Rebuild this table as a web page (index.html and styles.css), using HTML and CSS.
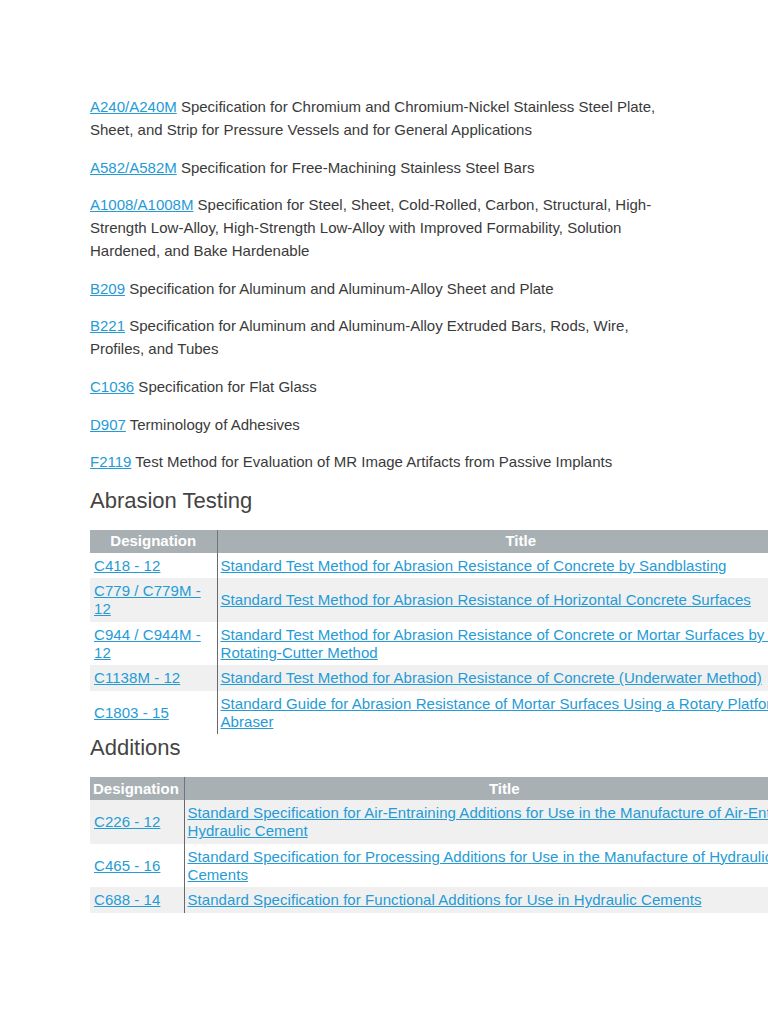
FILE: index.html
```html
<!DOCTYPE html>
<html>
<head>
<meta charset="utf-8">
<link rel="stylesheet" href="styles.css">
</head>
<body>
<div class="page">
  <div class="refs">
    <p><a href="#">A240/A240M</a> Specification for Chromium and Chromium-Nickel Stainless Steel Plate, Sheet, and Strip for Pressure Vessels and for General Applications</p>
    <p><a href="#">A582/A582M</a> Specification for Free-Machining Stainless Steel Bars</p>
    <p><a href="#">A1008/A1008M</a> Specification for Steel, Sheet, Cold-Rolled, Carbon, Structural, High-Strength Low-Alloy, High-Strength Low-Alloy with Improved Formability, Solution Hardened, and Bake Hardenable</p>
    <p><a href="#">B209</a> Specification for Aluminum and Aluminum-Alloy Sheet and Plate</p>
    <p><a href="#">B221</a> Specification for Aluminum and Aluminum-Alloy Extruded Bars, Rods, Wire, Profiles, and Tubes</p>
    <p><a href="#">C1036</a> Specification for Flat Glass</p>
    <p><a href="#">D907</a> Terminology of Adhesives</p>
    <p><a href="#">F2119</a> Test Method for Evaluation of MR Image Artifacts from Passive Implants</p>
  </div>

  <h2>Abrasion Testing</h2>
  <table class="std t1">
    <colgroup><col class="c-des1"><col></colgroup>
    <thead>
      <tr><th>Designation</th><th class="sep">Title</th></tr>
    </thead>
    <tbody>
      <tr><td><a href="#">C418 - 12</a></td><td class="sep"><a href="#">Standard Test Method for Abrasion Resistance of Concrete by Sandblasting</a></td></tr>
      <tr class="alt"><td><a href="#">C779 / C779M - 12</a></td><td class="sep"><a href="#">Standard Test Method for Abrasion Resistance of Horizontal Concrete Surfaces</a></td></tr>
      <tr><td><a href="#">C944 / C944M - 12</a></td><td class="sep"><a href="#">Standard Test Method for Abrasion Resistance of Concrete or Mortar Surfaces by the Rotating-Cutter Method</a></td></tr>
      <tr class="alt"><td><a href="#">C1138M - 12</a></td><td class="sep"><a href="#">Standard Test Method for Abrasion Resistance of Concrete (Underwater Method)</a></td></tr>
      <tr><td><a href="#">C1803 - 15</a></td><td class="sep"><a href="#">Standard Guide for Abrasion Resistance of Mortar Surfaces Using a Rotary Platform Abraser</a></td></tr>
    </tbody>
  </table>

  <h2 class="after-table">Additions</h2>
  <table class="std t2">
    <colgroup><col class="c-des2"><col></colgroup>
    <thead>
      <tr><th>Designation</th><th class="sep">Title</th></tr>
    </thead>
    <tbody>
      <tr class="alt"><td><a href="#">C226 - 12</a></td><td class="sep"><a href="#">Standard Specification for Air-Entraining Additions for Use in the Manufacture of Air-Entraining Hydraulic Cement</a></td></tr>
      <tr><td><a href="#">C465 - 16</a></td><td class="sep"><a href="#">Standard Specification for Processing Additions for Use in the Manufacture of Hydraulic Cements</a></td></tr>
      <tr class="alt"><td><a href="#">C688 - 14</a></td><td class="sep"><a href="#">Standard Specification for Functional Additions for Use in Hydraulic Cements</a></td></tr>
    </tbody>
  </table>
</div>
</body>
</html>
```

FILE: styles.css
```css
html, body {
  margin: 0;
  padding: 0;
  background: #ffffff;
  overflow-x: hidden;
}
body {
  font-family: "Liberation Sans", Arial, sans-serif;
  font-size: 15px;
  color: #3a3a3a;
}
.page {
  padding: 95px 0 0 90px;
  width: 734px;
}
a {
  color: #259bd6;
  text-decoration: underline;
}
.refs {
  width: 588px;
}
.refs p {
  margin: 0 0 14.6px 0;
  line-height: 23px;
}
h2 {
  font-weight: normal;
  font-size: 22px;
  line-height: 26px;
  color: #444444;
  margin: 0 0 16px 0;
}
h2.after-table {
  margin-top: 1px;
}
.std {
  width: 734px;
  border-collapse: collapse;
  table-layout: fixed;
  font-size: 15px;
  letter-spacing: 0.06px;
}
.c-des1 { width: 127px; }
.c-des2 { width: 94px; }
.std th {
  background: #a8b0b3;
  color: #ffffff;
  font-weight: bold;
  text-align: center;
  line-height: 18px;
  padding: 2.5px 4px;
  white-space: nowrap;
  letter-spacing: 0;
}
.std th.sep {
  border-left: 1px solid #6f7578;
}
.std td {
  line-height: 18px;
  padding: 4px 4px 3.5px 4px;
  vertical-align: middle;
  text-align: left;
}
.std td.sep {
  border-left: 1px solid #666a6c;
  padding-left: 3px;
}
.std tr.alt td {
  background: #f0f0f0;
}
.t2 th:first-child {
  text-align: left;
  padding-left: 3px;
}
```
